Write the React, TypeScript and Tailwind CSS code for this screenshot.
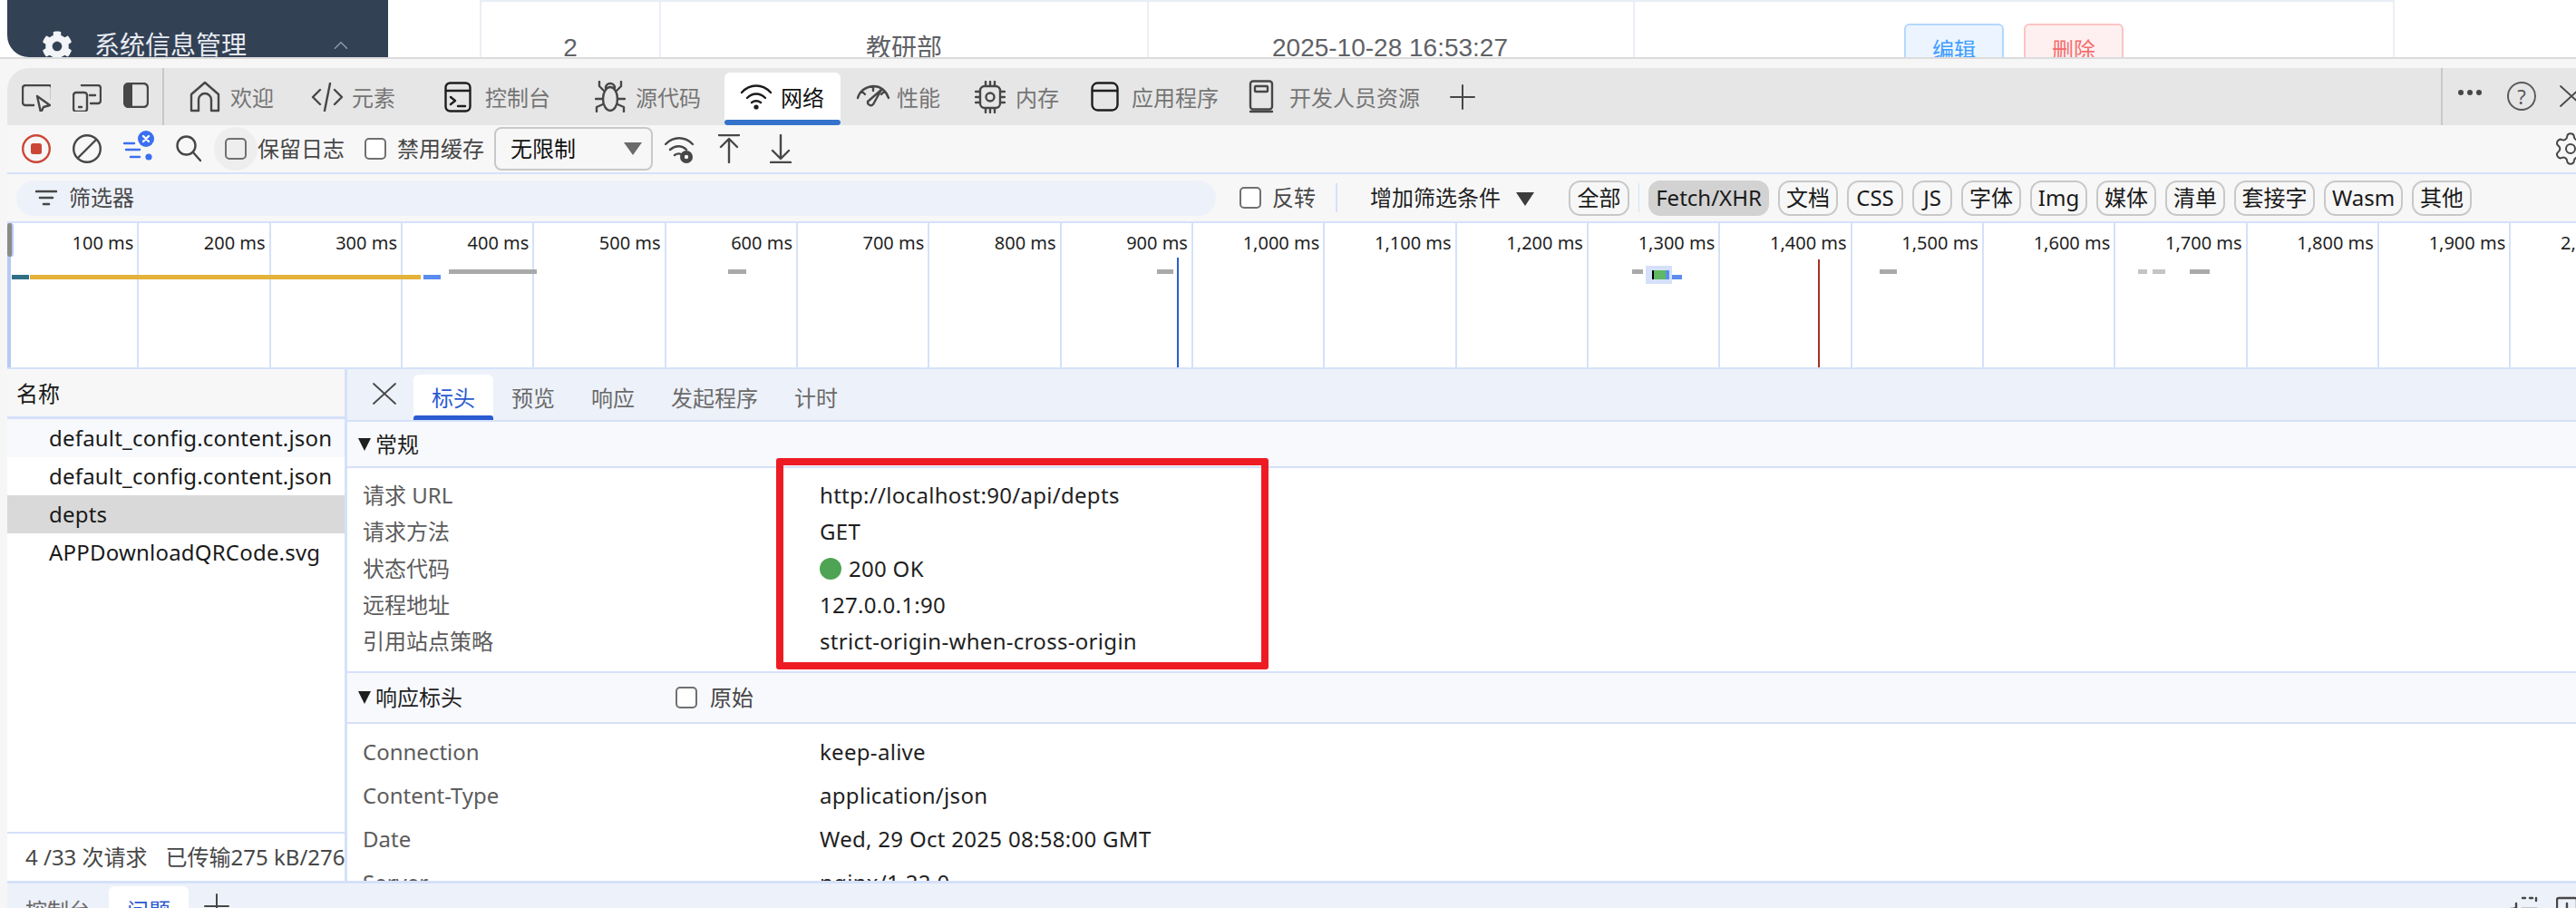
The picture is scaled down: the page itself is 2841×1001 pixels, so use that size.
import type { ReactNode } from "react"
import { Settings, ChevronUp } from "lucide-react"
import { FaCog } from "react-icons/fa"

const ink = "#474747"

function Ico({ w, h, children, color = ink, sw = 2.4 }: { w: number; h: number; children: ReactNode; color?: string; sw?: number }) {
  return (
    <svg width={w} height={h} viewBox={`0 0 ${w} ${h}`} fill="none" stroke={color} strokeWidth={sw} strokeLinecap="round" strokeLinejoin="round" className="shrink-0">
      {children}
    </svg>
  )
}

function Cross({ w = 26, h = 24 }: { w?: number; h?: number }) {
  return (
    <Ico w={w} h={h} sw={1.8}>
      <path d={`M1 1 ${w - 1} ${h - 1}M${w - 1} 1 1 ${h - 1}`} />
    </Ico>
  )
}

function PlusMark() {
  return (
    <Ico w={28} h={28} sw={2}>
      <path d="M14 1v26M1 14h26" />
    </Ico>
  )
}

const tabs: { label: string; w: string; active?: boolean; icon: ReactNode }[] = [
  {
    label: "欢迎",
    w: "w-[134px]",
    icon: (
      <Ico w={34} h={35}>
        <path d="M2 33V15L17 2l15 13v18h-8V21a7 7 0 0 0-14 0v12z" />
      </Ico>
    ),
  },
  {
    label: "元素",
    w: "w-[147px]",
    icon: (
      <Ico w={36} h={32}>
        <path d="M10 8 2 16l8 8M26 8l8 8-8 8M21 1l-6 30" />
      </Ico>
    ),
  },
  {
    label: "控制台",
    w: "w-[166px]",
    icon: (
      <Ico w={30} h={34} color="#1f1f1f">
        <rect x="1.5" y="1.5" width="27" height="31" rx="5" />
        <path d="M2 10h26M7 17l5 4-5 4M15 27h8" />
      </Ico>
    ),
  },
  {
    label: "源代码",
    w: "w-[160px]",
    icon: (
      <Ico w={34} h={35}>
        <path d="M12 8a5 5 0 0 1 10 0" />
        <ellipse cx="17" cy="20" rx="8" ry="13" />
        <path d="M5 1v5l5 5M29 1v5l-5 5M1 20h8M33 20h-8M2 34v-5l7-3M32 34v-5l-7-3" />
      </Ico>
    ),
  },
  {
    label: "网络",
    w: "w-[128px]",
    active: true,
    icon: (
      <Ico w={36} h={30} color="#1a1a1a">
        <path d="M2 10c9-10 23-10 32 0M8 16c6-6 14-6 20 0M13 21c3-2 7-2 10 0" />
        <circle cx="18" cy="26" r="2.6" fill="#1a1a1a" stroke="none" />
      </Ico>
    ),
  },
  {
    label: "性能",
    w: "w-[131px]",
    icon: (
      <Ico w={38} h={28}>
        <path d="M2 15C4 8 10 3 19 2c8 0 14 5 17 13M19 2v5M7 8l3 3M31 8l-3 3M28 6 19 22a3.5 3.5 0 0 1-6-3z" />
      </Ico>
    ),
  },
  {
    label: "内存",
    w: "w-[128px]",
    icon: (
      <Ico w={34} h={36}>
        <rect x="6" y="6" width="22" height="24" rx="5" />
        <circle cx="17" cy="18" r="4.5" />
        <path d="M12 1v4M17 1v4M22 1v4M12 31v4M17 31v4M22 31v4M1 12h4M1 18h4M1 24h4M29 12h4M29 18h4M29 24h4" />
      </Ico>
    ),
  },
  {
    label: "应用程序",
    w: "w-[174px]",
    icon: (
      <Ico w={31} h={33} color="#1f1f1f">
        <rect x="1.5" y="1.5" width="28" height="30" rx="6" />
        <path d="M2 10h27" />
      </Ico>
    ),
  },
  {
    label: "开发人员资源",
    w: "w-[220px]",
    icon: (
      <Ico w={28} h={37}>
        <rect x="2" y="1.5" width="24" height="31" rx="3" />
        <rect x="7" y="7" width="14" height="6" rx="1" />
        <path d="M2 35h24" />
      </Ico>
    ),
  },
]

const filters = [
  { label: "全部", w: "w-[67px]" },
  { label: "Fetch/XHR", w: "w-[133px]", on: true },
  { label: "文档", w: "w-[66px]" },
  { label: "CSS", w: "w-[62px]" },
  { label: "JS", w: "w-[44px]" },
  { label: "字体", w: "w-[66px]" },
  { label: "Img", w: "w-[63px]" },
  { label: "媒体", w: "w-[66px]" },
  { label: "清单", w: "w-[66px]" },
  { label: "套接字", w: "w-[89px]" },
  { label: "Wasm", w: "w-[87px]" },
  { label: "其他", w: "w-[66px]" },
]

const ticks = [
  "100 ms", "200 ms", "300 ms", "400 ms", "500 ms", "600 ms", "700 ms", "800 ms", "900 ms", "1,000 ms",
  "1,100 ms", "1,200 ms", "1,300 ms", "1,400 ms", "1,500 ms", "1,600 ms", "1,700 ms", "1,800 ms", "1,900 ms", "2,000 ms",
]

// waterfall marks, their place on the overview is the content
const marks = [
  { c: "bg-[#2f6f84]", l: "left-[5px]", t: "top-[57px]", w: "w-[19px]" },
  { c: "bg-[#e4b23a]", l: "left-[25px]", t: "top-[57px]", w: "w-[431px]" },
  { c: "bg-[#5b8def]", l: "left-[459px]", t: "top-[57px]", w: "w-[19px]" },
  { c: "bg-[#a9a9a9]", l: "left-[487px]", t: "top-[51px]", w: "w-[97px]" },
  { c: "bg-[#a9a9a9]", l: "left-[795px]", t: "top-[51px]", w: "w-[20px]" },
  { c: "bg-[#a9a9a9]", l: "left-[1268px]", t: "top-[51px]", w: "w-[18px]" },
  { c: "bg-[#a9a9a9]", l: "left-[1792px]", t: "top-[51px]", w: "w-[12px]" },
  { c: "bg-[#5b8def]", l: "left-[1836px]", t: "top-[57px]", w: "w-[11px]" },
  { c: "bg-[#a9a9a9]", l: "left-[2065px]", t: "top-[51px]", w: "w-[19px]" },
  { c: "bg-[#c4c4c4]", l: "left-[2350px]", t: "top-[51px]", w: "w-[10px]" },
  { c: "bg-[#c4c4c4]", l: "left-[2366px]", t: "top-[51px]", w: "w-[14px]" },
  { c: "bg-[#a9a9a9]", l: "left-[2407px]", t: "top-[51px]", w: "w-[22px]" },
]

function Check({ className = "" }: { className?: string }) {
  return <span className={`block w-6 h-6 shrink-0 rounded-[5px] border-2 border-[#707070] bg-white ${className}`} />
}

function Row({ label, h, children }: { label: string; h: string; children: ReactNode }) {
  return (
    <div className={`grid grid-cols-[504px_1fr] items-center whitespace-nowrap ${h}`}>
      <span className="text-[#5c5c5c]">{label}</span>
      <span className="text-[#1f1f1f] flex items-center tracking-[0.3px]">{children}</span>
    </div>
  )
}

function SectionHead({ label, h, children }: { label: string; h: string; children?: ReactNode }) {
  return (
    <div className={`flex items-center bg-[#f7f9fd] border-y-[2px] border-[#d5e1fa] pl-[12px] text-[#1f1f1f] ${h}`}>
      <span className="w-0 h-0 border-x-[7px] border-t-[14px] border-x-transparent border-t-[#1f1f1f] mr-[5px]" />
      <span className="w-[100px]">{label}</span>
      {children}
    </div>
  )
}

export default function App() {
  return (
    <div className="w-[2841px] h-[1001px] overflow-hidden bg-[#f6f6f6] text-[24px] leading-none font-['Noto_Sans','Noto_Sans_CJK_SC',sans-serif]">
      {/* page behind the devtools */}
      <div className="flex h-[65px] bg-white border-b-2 border-[#dcdcdc] overflow-hidden font-['Liberation_Sans','Noto_Sans_CJK_SC',sans-serif] text-[28px] text-[#606266]">
        <div className="flex items-start ml-[8px] w-[420px] h-full bg-[#334155] rounded-bl-[24px] text-white pt-[34px] pl-[38px] overflow-hidden">
          <FaCog size={34} className="shrink-0 text-[#f2f4f7]" />
          <span className="ml-[24px] mt-[2px] leading-[30px] text-[#e8ecf2]">系统信息管理</span>
          <ChevronUp size={26} strokeWidth={1.4} className="ml-[91px] mt-[3px] text-[#8d98a8]" />
        </div>
        <div className="ml-[101px] flex border-t-2 border-[#e8eef5] h-full">
          <div className="w-[200px] border-x-2 border-[#ebeef5] text-center pt-[37px]">2</div>
          <div className="w-[536px] text-center pt-[38px]">教研部</div>
          <div className="w-[536px] border-l-2 border-[#ebeef5] text-center pt-[37px] pr-[2px]">2025-10-28 16:53:27</div>
          <div className="w-[840px] border-x-2 border-[#ebeef5] flex gap-[22px] pl-[297px] pt-[24px]">
            <button className="w-[110px] h-[60px] shrink-0 rounded-[6px] border-2 border-[#b3d8ff] bg-[#ecf5ff] text-[#409eff] text-[24px]">编辑</button>
            <button className="w-[110px] h-[60px] shrink-0 rounded-[6px] border-2 border-[#fbc4c4] bg-[#fef0f0] text-[#f56c6c] text-[24px]">删除</button>
          </div>
        </div>
      </div>

      <div className="mt-[10px] ml-[8px] h-[926px] overflow-hidden rounded-tl-[24px] bg-white">
        {/* tab strip */}
        <div className="flex h-[63px] bg-[#e6e6e6]">
          <div className="flex items-start w-[173px] border-r-2 border-[#c8c8c8] pl-[16px] pt-[18px] gap-[24px]">
            <Ico w={32} h={30}>
              <path d="M13 23H4a3 3 0 0 1-3-3V4a3 3 0 0 1 3-3h26a3 3 0 0 1 3 3v12" />
              <path d="M17 13l14 10-7 2-3 6z" />
            </Ico>
            <Ico w={32} h={30}>
              <path d="M10 1h18a3 3 0 0 1 3 3v14a3 3 0 0 1-3 3h-8M19 12h6" />
              <rect x="1" y="9" width="15" height="21" rx="3" />
              <path d="M7 25h3" />
            </Ico>
            <svg width="28" height="28" viewBox="0 0 28 28" className="shrink-0 -mt-[2px]">
              <rect x="1" y="1" width="26" height="26" rx="5" fill="none" stroke={ink} strokeWidth="2.4" />
              <path d="M6 1h4v26H6a5 5 0 0 1-5-5V6a5 5 0 0 1 5-5z" fill={ink} />
            </svg>
          </div>
          <div className="flex ml-[11px] h-full">
            {tabs.map((t) => (
              <div
                key={t.label}
                className={`relative flex items-center pl-[17px] mt-[5px] rounded-t-[6px] ${t.w} ${t.active ? "bg-white text-[#111]" : "text-[#757575]"}`}
              >
                <span className="w-[45px] flex -mt-[5px]">{t.icon}</span>
                <span className="-mt-[3px]">{t.label}</span>
                {t.active && <span className="absolute left-0 right-0 bottom-0 h-[6px] rounded-[3px] bg-[#3373cc]" />}
              </div>
            ))}
            <span className="flex items-center h-full ml-[19px]">
              <PlusMark />
            </span>
          </div>
          <div className="ml-auto flex items-center w-[149px] h-full border-l-2 border-[#c8c8c8] pl-[17px] overflow-hidden">
            <span className="flex gap-[4px] -mt-[10px]">
              <i className="w-[6px] h-[6px] rounded-full bg-[#474747]" />
              <i className="w-[6px] h-[6px] rounded-full bg-[#474747]" />
              <i className="w-[6px] h-[6px] rounded-full bg-[#474747]" />
            </span>
            <span className="ml-[28px] -mt-[1px] w-[32px] h-[32px] shrink-0 rounded-full border-2 border-[#5a5a5a] text-[#5a5a5a] text-[22px] flex items-center justify-center">?</span>
            <span className="ml-[26px] -mt-[1px] shrink-0 text-[#474747]">
              <Cross w={26} h={24} />
            </span>
          </div>
        </div>

        {/* network toolbar */}
        <div className="flex items-center h-[54px] bg-[#f7f7f7] border-b-2 border-[#d5e1fa] pl-[16px] text-[#474747]">
          <Ico w={32} h={32} color="#cc4637">
            <circle cx="16" cy="16" r="14.8" />
            <rect x="10" y="10" width="12" height="12" rx="2.5" fill="#cc4637" stroke="none" />
          </Ico>
          <span className="ml-[24px]">
            <Ico w={32} h={32}>
              <circle cx="16" cy="16" r="14.8" />
              <path d="M6 26 26 6" />
            </Ico>
          </span>
          <span className="ml-[24px] -mt-[4px]">
            <Ico w={36} h={36} color="#3b6ff0">
              <path d="M1 14h11M3 21h15M8 29h10" />
              <circle cx="25" cy="9" r="9" fill="#3b6ff0" stroke="none" />
              <path d="M22 6l6 6M28 6l-6 6" stroke="white" />
              <circle cx="28" cy="29" r="3.6" fill="#3b6ff0" stroke="none" />
            </Ico>
          </span>
          <span className="ml-[22px]">
            <Ico w={28} h={30}>
              <circle cx="11.5" cy="11.5" r="10" />
              <path d="M19 19l8 9" />
            </Ico>
          </span>
          <span className="ml-[14px] w-[48px] h-[48px] rounded-full bg-[#eeeeee] flex items-center justify-center">
            <Check className="!bg-transparent" />
          </span>
          <span>保留日志</span>
          <Check className="ml-[22px]" />
          <span className="ml-[12px]">禁用缓存</span>
          <div className="flex items-center justify-between ml-[11px] w-[175px] h-[48px] rounded-[8px] border-2 border-[#c8c8c8] pl-[16px] pr-[10px] text-[#111]">
            无限制
            <span className="h-0 w-0 border-x-[10px] border-t-[14px] border-x-transparent border-t-[#6b6b6b]" />
          </div>
          <span className="ml-[13px] mt-[2px]">
            <Ico w={34} h={32}>
              <path d="M1 10c9-9 21-9 30 0M6 16c6-5 13-5 18 0M11 22c3-2 5-2 7-1" />
              <circle cx="24" cy="24" r="7" fill={ink} stroke="none" />
              <circle cx="24" cy="24" r="2.2" fill="#f7f7f7" stroke="none" />
            </Ico>
          </span>
          <span className="ml-[25px]">
            <Ico w={24} h={32}>
              <path d="M1 1h22M12 31V6M3 14l9-9 9 9" />
            </Ico>
          </span>
          <span className="ml-[33px]">
            <Ico w={24} h={32}>
              <path d="M1 31h22M12 1v25M3 18l9 9 9-9" />
            </Ico>
          </span>
          <Settings size={40} strokeWidth={1.2} className="ml-auto -mr-[14px] shrink-0 text-[#474747]" />
        </div>

        {/* filter row */}
        <div className="flex items-center h-[52px] bg-[#f7f7f7] pl-[10px] pr-[20px] text-[#1f1f1f]">
          <div className="flex items-center w-[1323px] h-[39px] rounded-full bg-[#edf1f9] pl-[21px] text-[#474747]">
            <Ico w={24} h={20} sw={2.6}>
              <path d="M1 3h22M5 10h14M9 17h6" />
            </Ico>
            <span className="ml-[13px]">筛选器</span>
          </div>
          <Check className="ml-[26px]" />
          <span className="ml-[12px] text-[#474747]">反转</span>
          <span className="ml-[22px] w-[2px] h-[32px] bg-[#d5e1fa]" />
          <span className="ml-[36px]">增加筛选条件</span>
          <span className="ml-[17px] mt-[3px] h-0 w-0 border-x-[10px] border-t-[15px] border-x-transparent border-t-[#3c3c3c]" />
          <div className="flex items-center gap-[10px] ml-[38px] text-[#1a1a1a]">
            {filters.map((f, i) => (
              <div key={f.label} className="contents">
                <span className={`${f.w} h-[39px] rounded-[13px] flex items-center justify-center whitespace-nowrap ${f.on ? "bg-[#d2d2d2]" : "border-2 border-[#c8c8c8]"}`}>
                  {f.label}
                </span>
                {i === 0 && <span className="w-[1px] h-[32px] bg-[#d5e1fa]" />}
              </div>
            ))}
          </div>
        </div>

        {/* overview */}
        <div className="relative flex h-[163px] bg-white border-y-2 border-[#d5e1fa] overflow-hidden text-[20px] text-[#1f1f1f]">
          {ticks.map((t) => (
            <div key={t} className="shrink-0 w-[145.33px] h-full border-r-2 border-[#d5e1fa] flex justify-end pr-[4px] pt-[12px] whitespace-nowrap">
              {t}
            </div>
          ))}
          <div className="absolute left-0 top-0 bottom-0 w-[4px] bg-[#b7caf5]" />
          <div className="absolute left-0 top-0 w-[7px] h-[37px] rounded-[3px] bg-[#8a8a8a] border-r-2 border-[#b7caf5]" />
          {marks.map((m) => (
            <div key={m.l} className={`absolute h-[5px] ${m.c} ${m.l} ${m.t} ${m.w}`} />
          ))}
          <div className="absolute left-[1807px] top-[47px] w-[29px] h-[20px] bg-[#d5e1fa] flex items-center pl-[7px]">
            <span className="w-[2px] h-[10px] bg-black" />
            <span className="w-[13px] h-[10px] bg-[#5fb963]" />
            <span className="w-[4px] h-[10px] bg-[#5b8def]" />
          </div>
          <div className="absolute left-[1290px] top-[38px] bottom-0 w-[2px] bg-[#2a5bd0]" />
          <div className="absolute left-[1997px] top-[40px] bottom-0 w-[2px] bg-[#a33025]" />
        </div>

        {/* requests and details */}
        <div className="flex h-[564px] bg-white">
          <div className="flex flex-col w-[375px] shrink-0 border-r-[3px] border-[#d5e1fa] text-[#1a1a1a]">
            <div className="flex items-center h-[55px] shrink-0 bg-[#f7f7f7] border-b-[3px] border-[#d5e1fa] pl-[10px] pt-[1px]">名称</div>
            <div className="flex flex-col flex-1 tracking-[0.2px]">
              {["default_config.content.json", "default_config.content.json", "depts", "APPDownloadQRCode.svg"].map((n, i) => (
                <div
                  key={i}
                  className={`flex items-center h-[42px] pl-[46px] whitespace-nowrap ${i === 2 ? "bg-[#d9d9d9]" : i === 0 ? "bg-[#f7f9fd]" : "bg-white"}`}
                >
                  {n}
                </div>
              ))}
            </div>
            <div className="flex items-center h-[54px] shrink-0 border-t-[2px] border-[#d5e1fa] pl-[20px] whitespace-nowrap overflow-hidden text-[#474747]">
              4 /33 次请求<span className="ml-[20px]">已传输275 kB/276 kB 资源</span>
            </div>
          </div>

          <div className="relative flex-1 overflow-hidden">
            <div className="flex items-end h-[56px] bg-[#edf1f9] text-[#6a6a6a] pl-[28px]">
              <span className="self-start mt-[15px]">
                <Cross />
              </span>
              <span className="relative flex items-center justify-center ml-[19px] w-[88px] h-[50px] rounded-t-[6px] bg-white text-[#2a5bd0] pt-[2px]">
                标头
                <i className="absolute left-0 right-0 bottom-0 h-[5px] rounded-t-[3px] bg-[#2a5bd0]" />
              </span>
              <span className="flex gap-[40px] h-[50px] items-center ml-[20px] pt-[2px]">
                <span>预览</span>
                <span>响应</span>
                <span>发起程序</span>
                <span>计时</span>
              </span>
            </div>
            <SectionHead label="常规" h="h-[53px]" />
            <div className="pl-[17px] pt-[10px] h-[224px]">
              <Row label="请求 URL" h="h-[40.3px]">http://localhost:90/api/depts</Row>
              <Row label="请求方法" h="h-[40.3px]">GET</Row>
              <Row label="状态代码" h="h-[40.3px]">
                <i className="w-[24px] h-[24px] rounded-full bg-[#4fa354] mr-[8px]" />
                200 OK
              </Row>
              <Row label="远程地址" h="h-[40.3px]">127.0.0.1:90</Row>
              <Row label="引用站点策略" h="h-[40.3px]">strict-origin-when-cross-origin</Row>
            </div>
            <SectionHead label="响应标头" h="h-[58px]">
              <Check className="ml-[231px]" />
              <span className="ml-[14px] text-[#474747]">原始</span>
            </SectionHead>
            <div className="pl-[17px] pt-[7px]">
              <Row label="Connection" h="h-[48px]">keep-alive</Row>
              <Row label="Content-Type" h="h-[48px]">application/json</Row>
              <Row label="Date" h="h-[48px]">Wed, 29 Oct 2025 08:58:00 GMT</Row>
              <Row label="Server" h="h-[48px]">nginx/1.22.0</Row>
            </div>
            <div className="absolute left-[473px] top-[98px] w-[543px] h-[233px] rounded-[3px] border-[8px] border-[#ed1c24]" />
          </div>
        </div>

        {/* drawer tabs */}
        <div className="flex items-start h-[32px] bg-[#edf1f9] border-t-[3px] border-[#d5e1fa] text-[#6a6a6a] overflow-hidden">
          <span className="ml-[20px] w-[92px] shrink-0 mt-[18px]">控制台</span>
          <span className="w-[88px] h-[25px] mt-[3px] shrink-0 rounded-t-[6px] bg-white text-[#2a5bd0] text-center pt-[15px]">问题</span>
          <span className="ml-[17px] mt-[11px]">
            <PlusMark />
          </span>
          <span className="ml-auto flex gap-[20px] mr-[-2px] mt-[14px]">
            <Ico w={33} h={26}>
              <path d="M1 24a9 9 0 0 1 8-11M9 8v6H3M16 2h3M24 2h3M31 2v3M15 14h17v10H15z" />
            </Ico>
            <Ico w={24} h={26}>
              <path d="M23 24V4a2 2 0 0 0-2-2H3a2 2 0 0 0-2 2v20M12 8v14M7 17l5 5 5-5" />
            </Ico>
          </span>
        </div>
      </div>
    </div>
  )
}
